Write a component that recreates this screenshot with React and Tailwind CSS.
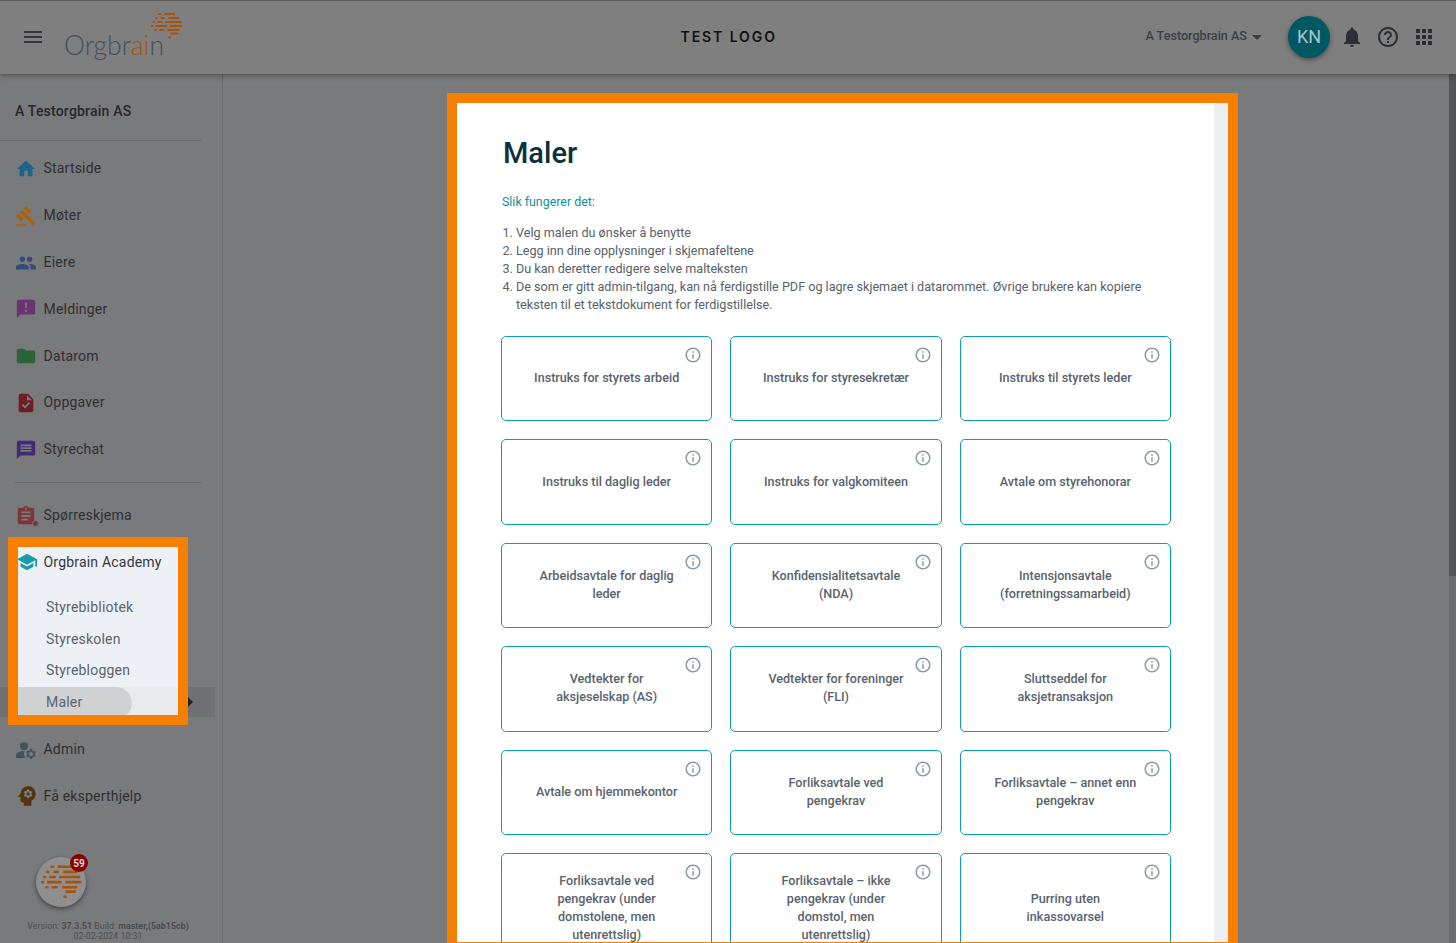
import React from "react";
import {
  MdMenu, MdArrowDropDown, MdNotifications, MdHelpOutline, MdApps, MdHome, MdGavel, MdPeople,
  MdAnnouncement, MdFolder, MdTask, MdMessage, MdAssignment, MdSchool, MdManageAccounts,
  MdPsychology, MdInfoOutline, MdArrowRight,
} from "react-icons/md";

function Brain({ className }) {
  const bars = [
    [18.3, 5, 3, 2], [24, 5, 11, 2],
    [15, 9, 2.5, 2], [20.6, 9, 4.4, 2], [28.3, 9, 11, 2],
    [12.6, 13, 2.5, 2], [17.3, 13, 5.4, 2], [25, 13, 16.6, 2],
    [11, 17, 2.5, 2], [15.6, 17, 11.6, 2], [30, 17, 12.4, 2],
    [14.3, 21, 2.5, 2], [19.3, 21, 4.7, 2], [27.3, 21, 12, 2],
    [30, 24.4, 8.3, 2], [28.3, 28.4, 2.7, 2],
  ];
  return (
    <svg viewBox="0 0 50 35" className={className} fill="#a8530d">
      {bars.map((b, i) => (
        <rect key={i} x={b[0]} y={b[1]} width={b[2]} height={b[3]} rx="0.6" />
      ))}
    </svg>
  );
}

function SurveyIcon() {
  return (
    <span className="relative block w-[22px] h-[22px]">
      <MdAssignment className="w-[22px] h-[22px] text-[#7c3838]" />
      <span className="absolute right-[-2px] bottom-[0px] w-[7px] h-[7px] rounded-full bg-[#7c3838] border border-[#797a7c]" />
    </span>
  );
}

function NavRow({ icon, label }) {
  return (
    <div className="h-[46.8px] flex items-center pl-[15px]">
      <span className="w-[28.5px] flex items-center shrink-0">{icon}</span>
      <span className="text-[14px] tracking-[0.2px] text-[#2f3033]">{label}</span>
    </div>
  );
}

const nav1 = [
  [<MdHome className="w-[22px] h-[22px] text-[#1f6388]" />, "Startside"],
  [<MdGavel className="w-[22px] h-[22px] text-[#a86210]" />, "Møter"],
  [<MdPeople className="w-[22px] h-[22px] text-[#334a80]" />, "Eiere"],
  [<MdAnnouncement className="w-[22px] h-[22px] text-[#6a3372]" />, "Meldinger"],
  [<MdFolder className="w-[22px] h-[22px] text-[#2a6538]" />, "Datarom"],
  [<MdTask className="w-[22px] h-[22px] text-[#6e1e22]" />, "Oppgaver"],
  [<MdMessage className="w-[22px] h-[22px] text-[#432a74]" />, "Styrechat"],
];

const cards = [
  "Instruks for styrets arbeid", "Instruks for styresekretær", "Instruks til styrets leder",
  "Instruks til daglig leder", "Instruks for valgkomiteen", "Avtale om styrehonorar",
  "Arbeidsavtale for daglig leder", "Konfidensialitetsavtale (NDA)", "Intensjonsavtale (forretningssamarbeid)",
  "Vedtekter for aksjeselskap (AS)", "Vedtekter for foreninger (FLI)", "Sluttseddel for aksjetransaksjon",
  "Avtale om hjemmekontor", "Forliksavtale ved pengekrav", "Forliksavtale – annet enn pengekrav",
  "Forliksavtale ved pengekrav (under domstolene, men utenrettslig)",
  "Forliksavtale – ikke pengekrav (under domstol, men utenrettslig)",
  "Purring uten inkassovarsel",
];

function Card({ text }) {
  return (
    <div className="relative min-h-[85.4px] border border-[#0a9fb0] rounded-[5px] bg-white flex items-center justify-center text-center pt-[17.6px] pb-[18.4px] px-[31px]">
      <span className="text-[12.6px] leading-[18px] font-medium text-[#59636d]">{text}</span>
      <MdInfoOutline className="absolute top-[9px] right-[9px] w-[18px] h-[18px] text-[#8a9aa3]" />
    </div>
  );
}

export default function App() {
  return (
    <div className="relative h-[943px] w-[1456px] overflow-hidden bg-[#797a7c] font-['Roboto',sans-serif] flex flex-col">
      <header className="relative z-20 h-[74px] shrink-0 bg-[#7f7f7f] border-t border-[#5c5c5c] shadow-[0_2px_5px_rgba(0,0,0,0.3)] flex items-center pb-[2px]">
        <MdMenu className="ml-[21px] w-[24px] h-[24px] text-[#34383c] shrink-0" />
        <div className="relative ml-[19px] w-[130px] h-[70px] shrink-0">
          <span className="absolute left-0 top-[25px] text-[26.5px] leading-[36px] font-light font-['Lato',sans-serif] text-[#3f525c]">
            Orgbr<span className="text-[#a8530d]">ai</span>n
          </span>
          <Brain className="absolute left-[76px] top-[6px] w-[50px] h-[35px]" />
        </div>
        <div className="flex-1 flex justify-center pl-[118px]">
          <span className="text-[14px] font-['Inter',sans-serif] font-semibold tracking-[1.9px] text-[#111]">TEST LOGO</span>
        </div>
        <span className="text-[12.6px] font-medium text-[#3a4046]">A Testorgbrain AS</span>
        <MdArrowDropDown className="w-[24px] h-[24px] text-[#3a4046] ml-[-2px]" />
        <div className="ml-[19px] w-[42px] h-[42px] rounded-full bg-[#005863] shadow-[0_2px_5px_rgba(0,0,0,0.4)] flex items-center justify-center text-[18px] text-[#a9c4c7]">KN</div>
        <MdNotifications className="ml-[10px] w-[24px] h-[24px] text-[#2b2f33]" />
        <MdHelpOutline className="ml-[12px] w-[24px] h-[24px] text-[#2b2f33]" />
        <MdApps className="ml-[12px] w-[24px] h-[24px] text-[#2b2f33]" />
        <div className="w-[20px]" />
      </header>

      <div className="flex flex-1 min-h-0">
        <aside className="w-[223px] shrink-0 border-r border-[#666b6e] overflow-hidden">
          <div className="h-[67px] pl-[15px] pt-[27px] mr-[21px] border-b border-[#676a6c]">
            <div className="text-[14px] tracking-[0.2px] leading-[20px] font-medium text-[#26282b]">A Testorgbrain AS</div>
          </div>
          <div className="mt-[4.6px]">
            {nav1.map(([icon, label]) => (
              <NavRow key={label} icon={icon} label={label} />
            ))}
          </div>
          <div className="mt-[8.9px] ml-[15px] mr-[21px] border-t border-[#676a6c]" />
          <div className="mt-[9.5px]">
            <NavRow icon={<SurveyIcon />} label="Spørreskjema" />
          </div>

          <div className="relative h-[189.2px] mt-[-2.4px]">
            <div className="absolute left-0 top-[150px] w-[215px] h-[30px] bg-[#707173]">
              <MdArrowRight className="absolute left-[178px] top-[3px] w-[24px] h-[24px] text-[#222]" />
            </div>
            <div className="relative ml-[8px] w-[180px] h-[188px] border-[10px] border-[#f77f00] bg-[#edf0f4] overflow-hidden">
              <div className="h-[31px] flex items-center">
                <MdSchool className="ml-[-2px] w-[22px] h-[22px] text-[#1a9aaa] shrink-0" />
                <span className="ml-[5.5px] text-[14px] tracking-[0.2px] text-[#333a40]">Orgbrain Academy</span>
              </div>
              <div className="mt-[14px] text-[14px] tracking-[0.2px] text-[#5b6470]">
                <div className="h-[32px] flex items-center pl-[28px]">Styrebibliotek</div>
                <div className="h-[31px] flex items-center pl-[28px]">Styreskolen</div>
                <div className="h-[32px] flex items-center pl-[28px]">Styrebloggen</div>
                <div className="h-[32px] flex items-center pl-[28px] bg-[#e8eaeb]">
                  <span className="absolute left-0 w-[114px] h-[32px] rounded-r-full bg-[#d0d1d3]" />
                  <span className="relative">Maler</span>
                </div>
              </div>
            </div>
          </div>

          <NavRow icon={<MdManageAccounts className="ml-[-1px] w-[24px] h-[24px] text-[#44545e]" />} label="Admin" />
          <NavRow icon={<MdPsychology className="ml-[-1px] w-[26px] h-[26px] text-[#4f360e]" />} label="Få eksperthjelp" />

          <div className="relative ml-[36px] mt-[37.4px] w-[50px] h-[50px] rounded-full bg-[#8f8f8f] shadow-[0_2px_5px_rgba(0,0,0,0.45)]">
            <Brain className="absolute left-[-9.5px] top-[2px] w-[64px] h-[45px]" />
            <span className="absolute right-[-2px] top-[-3px] w-[18px] h-[18px] rounded-full bg-[#870000] text-[#e5d0d0] text-[10px] font-bold flex items-center justify-center">59</span>
          </div>
          <div className="mt-[13.5px] w-[216px] text-center text-[8.9px] leading-[10px] text-[#4a4d50]">
            <div>Version: <b>37.3.51</b> Build: <b>master,(5ab15cb)</b></div>
            <div>02-02-2024 10:31</div>
          </div>
        </aside>

        <main className="flex-1 min-w-0 pl-[224px] pt-[19px] overflow-hidden">
          <div className="w-[791px] h-[859px] border-[10px] border-[#f77f00] flex overflow-hidden">
            <div className="flex-1 min-w-0 bg-white pl-[44px] pr-[43px]">
              <h1 className="pt-[30px] pl-[2px] text-[29px] leading-[40px] font-medium text-[#0e2f3e]">Maler</h1>
              <p className="mt-[20px] pl-[1px] text-[12.4px] leading-[18px] text-[#0f8fa3]">Slik fungerer det:</p>
              <ol className="mt-[13px] list-decimal pl-[15px] text-[12.6px] leading-[18px] text-[#58616b]">
                <li>Velg malen du ønsker å benytte</li>
                <li>Legg inn dine opplysninger i skjemafeltene</li>
                <li>Du kan deretter redigere selve malteksten</li>
                <li>De som er gitt admin-tilgang, kan nå ferdigstille PDF og lagre skjemaet i datarommet. Øvrige brukere kan kopiere teksten til et tekstdokument for ferdigstillelse.</li>
              </ol>
              <div className="mt-[22px] grid grid-cols-3 gap-[18px]">
                {cards.map((c) => (
                  <Card key={c} text={c} />
                ))}
              </div>
            </div>
            <div className="w-[14px] shrink-0 bg-[#eceff3]" />
          </div>
        </main>

        <div className="w-[7px] shrink-0 bg-[#6c6c6c]">
          <div className="h-[502px] bg-[#565656]" />
        </div>
      </div>
    </div>
  );
}
